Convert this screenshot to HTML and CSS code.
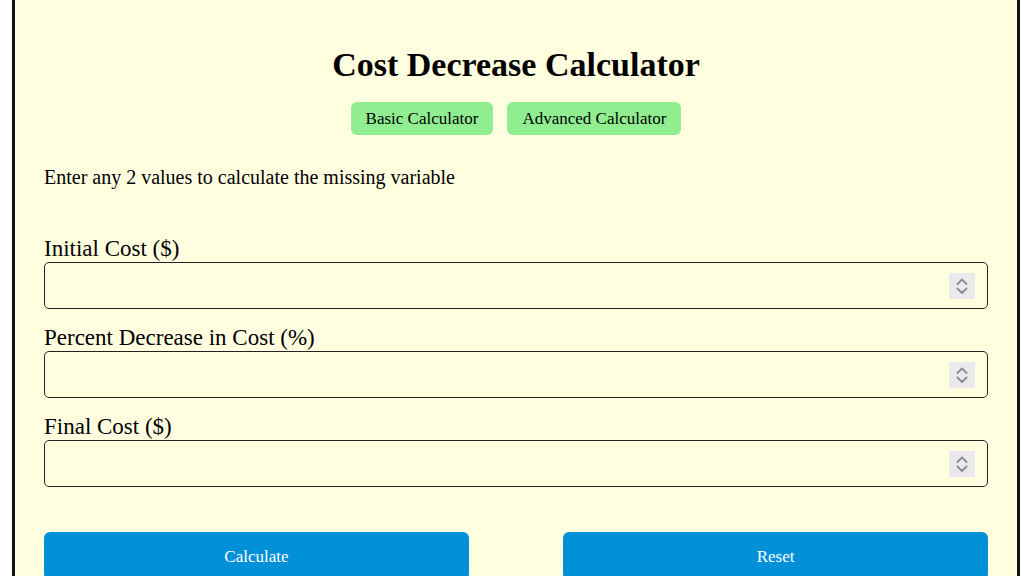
FILE: index.html
```html
<!DOCTYPE html>
<html>
<head>
<meta charset="utf-8">
<link rel="stylesheet" href="styles.css">
</head>
<body>
<div class="calc">
  <h1 class="title">Cost Decrease Calculator</h1>
  <div class="tabs">
    <button class="tab">Basic Calculator</button>
    <button class="tab">Advanced Calculator</button>
  </div>
  <p class="hint">Enter any 2 values to calculate the missing variable</p>
  <div class="fields">
    <div class="group">
      <label class="label">Initial Cost ($)</label>
      <div class="field-wrap">
        <input class="field" type="number">
        <span class="spin"><svg width="26" height="26" viewBox="0 0 26 26"><path d="M8.5 11 L13 6.5 L17.5 11" fill="none" stroke="#8c8c8c" stroke-width="1.8" stroke-linecap="round" stroke-linejoin="round"/><path d="M8.5 15.5 L13 20 L17.5 15.5" fill="none" stroke="#8c8c8c" stroke-width="1.8" stroke-linecap="round" stroke-linejoin="round"/></svg></span>
      </div>
    </div>
    <div class="group">
      <label class="label">Percent Decrease in Cost (%)</label>
      <div class="field-wrap">
        <input class="field" type="number">
        <span class="spin"><svg width="26" height="26" viewBox="0 0 26 26"><path d="M8.5 11 L13 6.5 L17.5 11" fill="none" stroke="#8c8c8c" stroke-width="1.8" stroke-linecap="round" stroke-linejoin="round"/><path d="M8.5 15.5 L13 20 L17.5 15.5" fill="none" stroke="#8c8c8c" stroke-width="1.8" stroke-linecap="round" stroke-linejoin="round"/></svg></span>
      </div>
    </div>
    <div class="group">
      <label class="label">Final Cost ($)</label>
      <div class="field-wrap">
        <input class="field" type="number">
        <span class="spin"><svg width="26" height="26" viewBox="0 0 26 26"><path d="M8.5 11 L13 6.5 L17.5 11" fill="none" stroke="#8c8c8c" stroke-width="1.8" stroke-linecap="round" stroke-linejoin="round"/><path d="M8.5 15.5 L13 20 L17.5 15.5" fill="none" stroke="#8c8c8c" stroke-width="1.8" stroke-linecap="round" stroke-linejoin="round"/></svg></span>
      </div>
    </div>
  </div>
  <div class="actions">
    <button class="action">Calculate</button>
    <button class="action">Reset</button>
  </div>
</div>
</body>
</html>
```
FILE: styles.css
```css
html, body {
  margin: 0;
  padding: 0;
  background: #ffffff;
}
body {
  font-family: "Liberation Serif", "Times New Roman", serif;
  color: #000;
}
.calc {
  box-sizing: border-box;
  width: 1008px;
  margin-left: 12px;
  background: #ffffe0;
  border: 3px solid #111;
  border-top: none;
  padding: 44px 29px 60px;
  min-height: 700px;
}
.title {
  font-size: 34px;
  font-weight: bold;
  text-align: center;
  margin: 0;
  line-height: 41px;
}
.tabs {
  display: flex;
  justify-content: center;
  gap: 14px;
  margin-top: 17px;
}
.tab {
  font-family: "Liberation Serif", "Times New Roman", serif;
  font-size: 17px;
  background: #90ee90;
  border: none;
  border-radius: 6px;
  padding: 0 15px;
  height: 33px;
  color: #000;
}
.hint {
  font-size: 20px;
  margin: 31px 0 0;
  line-height: 23px;
}
.fields {
  display: flex;
  flex-direction: column;
  gap: 16px;
  margin-top: 47px;
}
.label {
  display: block;
  font-size: 23px;
  line-height: 26px;
}
.field-wrap {
  position: relative;
}
.field {
  display: block;
  box-sizing: border-box;
  width: 100%;
  height: 47px;
  border: 1px solid #222;
  border-radius: 5px;
  background: transparent;
  font-size: 16px;
  padding: 0 10px;
  margin: 0;
  -moz-appearance: textfield;
  appearance: textfield;
}
.field::-webkit-inner-spin-button,
.field::-webkit-outer-spin-button {
  -webkit-appearance: none;
  margin: 0;
}
.spin {
  position: absolute;
  right: 13px;
  top: 11px;
  width: 26px;
  height: 26px;
  background: #e9e9ee;
  display: block;
}
.spin svg {
  display: block;
}
.actions {
  display: flex;
  justify-content: space-between;
  margin-top: 45px;
}
.action {
  width: 45%;
  height: 48px;
  background: #0090d7;
  color: #fff;
  border: none;
  border-radius: 6px;
  font-family: "Liberation Serif", "Times New Roman", serif;
  font-size: 17px;
  padding-bottom: 0;
  align-self: flex-start;
}
```
